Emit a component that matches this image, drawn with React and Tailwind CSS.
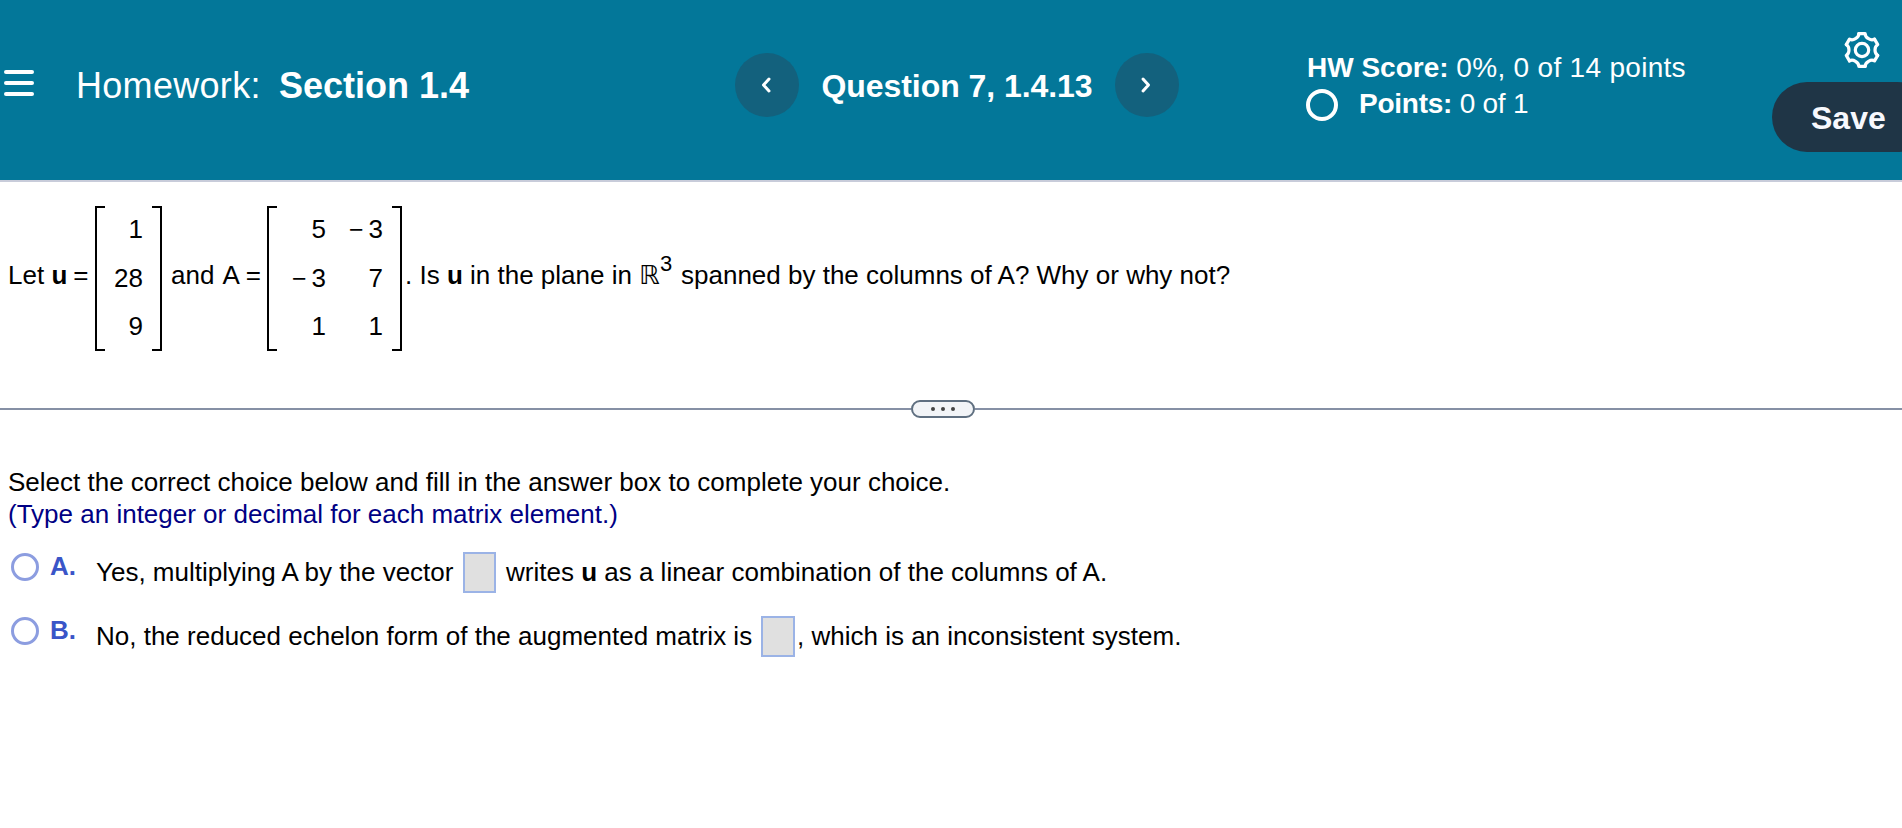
const VECTOR_U = [["1"], ["28"], ["9"]];
const MATRIX_A = [["5", "−3"], ["−3", "7"], ["1", "1"]];
const GEAR_TEETH = [0, 60, 120, 180, 240, 300];

function Entry({ value }) {
  const negative = value.startsWith("−");
  return (
    <span className="flex justify-end whitespace-nowrap">
      {negative && <span className="mr-[5px] text-[25px]">−</span>}
      {negative ? value.slice(1) : value}
    </span>
  );
}

function Matrix({ rows, className, gridClass }) {
  return (
    <div className={`flex h-[145px] shrink-0 ${className}`}>
      <div className="w-[10px] shrink-0 border-y-2 border-l-2 border-black"/>
      <div className={`grid flex-1 h-[146px] -mt-px grid-rows-3 leading-[49px] ${gridClass}`}>
        {rows.flat().map((v, i) => <Entry key={i} value={v}/>)}
      </div>
      <div className="w-[10px] shrink-0 border-y-2 border-r-2 border-black"/>
    </div>
  );
}

function GearIcon() {
  return (
    <svg width="36" height="36" viewBox="-18 -18 36 36" fill="none" stroke="white" strokeWidth="3.2" strokeLinecap="round" strokeLinejoin="round">
      {GEAR_TEETH.map(deg => (
        <path key={deg} transform={`rotate(${deg})`} d="M-3.2-16.3H3.2C3.1-12.2 9-8.8 12.5-10.9"/>
      ))}
      <circle r="6.7"/>
    </svg>
  );
}

function Chevron({ d }) {
  return (
    <svg width="12" height="18" viewBox="0 0 12 18" fill="none" stroke="white" strokeWidth="3" strokeLinecap="round" strokeLinejoin="round">
      <path d={d}/>
    </svg>
  );
}

function Header() {
  return (
    <header className="flex h-[182px] items-start overflow-hidden border-b-2 border-[#c8ccda] bg-[#037799] text-white">
      <button className="ml-[4px] mt-[70px] flex w-[30px] shrink-0 flex-col gap-[7px]">
        <span className="h-1 w-full rounded-full bg-white"/>
        <span className="h-1 w-full rounded-full bg-white"/>
        <span className="h-1 w-full rounded-full bg-white"/>
      </button>

      <div className="ml-[42px] mt-[62px] flex w-[659px] shrink-0 text-[36px] leading-[48px] whitespace-nowrap">
        <h1 className="w-[203px] tracking-[0.3px]">Homework:</h1>
        <span className="font-bold">Section 1.4</span>
      </div>

      <nav className="mt-[53px] flex w-[444px] shrink-0 items-center justify-between">
        <button className="flex size-16 items-center justify-center rounded-full bg-[#13617d] pr-[2px]">
          <Chevron d="M9 3 3.5 9 9 15"/>
        </button>
        <span className="pt-[2px] text-[32px] font-bold leading-[62px] tracking-[-0.05px] whitespace-nowrap">Question 7, 1.4.13</span>
        <button className="flex size-16 items-center justify-center rounded-full bg-[#13617d] pr-[2px]">
          <Chevron d="M3 3 8.5 9 3 15"/>
        </button>
      </nav>

      <div className="ml-[128px] mt-[50px] w-[465px] shrink-0 text-[28px] leading-[36px] whitespace-nowrap">
        <p><b>HW Score:</b> <span className="tracking-[0.3px]">0%, 0 of 14 points</span></p>
        <div className="flex">
          <span className="mt-[3px] -ml-px size-8 shrink-0 rounded-full border-4 border-white"/>
          <p className="ml-[21px] tracking-[-0.25px]"><b>Points:</b> 0 of 1</p>
        </div>
      </div>

      <div className="mt-[32px] w-[160px] shrink-0">
        <div className="ml-[72px]"><GearIcon/></div>
        <button className="mt-[14px] block h-[70px] w-[160px] rounded-full bg-[#1f3546] pt-[2px] pl-[39px] text-left text-[32px] font-bold text-[#f7f8fd]">Save</button>
      </div>
    </header>
  );
}

function Question() {
  return (
    <section className="flex h-[226px] pt-[24px] pl-2 whitespace-nowrap">
      <div className="mt-[53px] w-[87px] shrink-0 leading-[32px]">Let <b>u</b><span className="ml-[6px]">=</span></div>
      <Matrix rows={VECTOR_U} className="w-[67px]" gridClass="pr-[9px]"/>
      <div className="mt-[53px] ml-[9px] w-[96px] shrink-0 leading-[32px]">and<span className="ml-[8px]">A</span><span className="ml-[6px]">=</span></div>
      <Matrix rows={MATRIX_A} className="w-[135px]" gridClass="grid-cols-[49px_57px] pr-[9px]"/>
      <div className="mt-[53px] ml-[3px] flex leading-[32px]">
        <span className="w-[234px]">. Is <b>u</b> in the plane in</span>
        <span className="w-[21px] font-['DejaVu_Sans',sans-serif]">ℝ</span>
        <span className="-mt-[11px] w-[21px] text-[22px]">3</span>
        <span>spanned by the columns of A? Why or why not?</span>
      </div>
    </section>
  );
}

function Divider() {
  return (
    <div className="-mt-[8px] flex h-[18px] items-center">
      <span className="h-0.5 w-[911px] bg-[#8690a5]"/>
      <button className="flex h-[18px] w-16 items-center justify-center gap-[6px] rounded-full border-2 border-[#5f6f80] bg-[#f2f4f7]">
        <i className="size-1 rounded-full bg-[#444]"/>
        <i className="size-1 rounded-full bg-[#444]"/>
        <i className="size-1 rounded-full bg-[#444]"/>
      </button>
      <span className="h-0.5 flex-1 bg-[#8690a5]"/>
    </div>
  );
}

function Choice({ letter, before, after, beforeClass, boxClass }) {
  return (
    <div className="flex h-[64px] items-start whitespace-nowrap">
      <span className="mt-px ml-[3px] size-7 shrink-0 rounded-full border-[3px] border-[#8c9de0] bg-white"/>
      <b className="ml-[11px] mt-[-2px] w-[46px] shrink-0 text-[#3a55c8]">{letter}.</b>
      <span className={`mt-[4px] shrink-0 ${beforeClass}`}>{before}</span>
      <span className={`h-[41px] shrink-0 border-2 border-[#9bb3e6] bg-[#e0e0e0] ${boxClass}`}/>
      <span className="mt-[4px]">{after}</span>
    </div>
  );
}

export default function App() {
  return (
    <div className="h-[828px] overflow-hidden bg-white font-['Liberation_Sans',Arial,sans-serif] text-[26px] leading-[32px] text-black">
      <Header/>
      <Question/>
      <Divider/>
      <main className="pt-[48px] pl-2 whitespace-nowrap">
        <p>Select the correct choice below and fill in the answer box to complete your choice.</p>
        <p className="text-[#000084]">(Type an integer or decimal for each matrix element.)</p>
        <div className="mt-[22px]">
          <Choice letter="A" before="Yes, multiplying A by the vector" beforeClass="w-[367px]" boxClass="mr-[10px] w-[33px]"
            after={<>writes <b>u</b> as a linear combination of the columns of A.</>}/>
          <Choice letter="B" before="No, the reduced echelon form of the augmented matrix is" beforeClass="w-[665px]" boxClass="mr-[2px] w-[34px]"
            after=", which is an inconsistent system."/>
        </div>
      </main>
    </div>
  );
}
